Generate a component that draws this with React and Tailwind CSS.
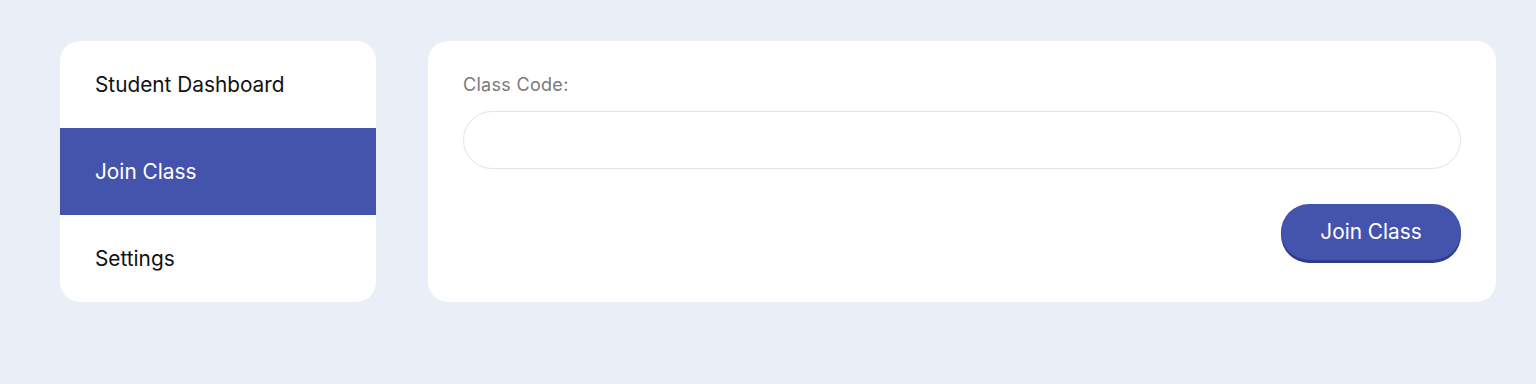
export default function App() {
  return (
    <div className="min-h-[384px] w-full bg-[#eaeef7] font-['Inter',sans-serif]">
      <div className="flex items-start gap-[52px] pl-[60px] pr-[40px] pt-[41px]">
        <nav className="w-[316px] shrink-0 overflow-hidden rounded-[20px] bg-white">
          <div className="flex h-[87px] items-center px-[35px] text-[20.8px] text-[#111]">Student Dashboard</div>
          <div className="flex h-[87px] items-center bg-[#4453ab] px-[35px] text-[20.8px] text-white">Join Class</div>
          <div className="flex h-[87px] items-center px-[35px] text-[20.8px] text-[#111]">Settings</div>
        </nav>
        <main className="flex h-[261px] flex-1 flex-col rounded-[20px] bg-white px-[35px] pt-[32px]">
          <label className="text-[18px] leading-[24px] tracking-[0.3px] text-[#7a7a7a]">Class Code:</label>
          <input className="mt-[14px] h-[58px] w-full rounded-full border border-[#e3e3e3] bg-white px-6 text-[16px] outline-none" />
          <div className="mt-[35px] flex justify-end">
            <button className="h-[56px] w-[180px] rounded-full bg-[#4453ab] text-[20.8px] text-white shadow-[0_3px_0_#2e3a8c]">Join Class</button>
          </div>
        </main>
      </div>
    </div>
  );
}
